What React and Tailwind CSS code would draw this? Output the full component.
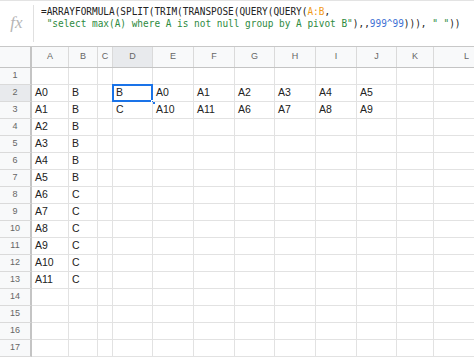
import React from 'react';

const cols = [
  { name: 'A', w: 'w-[37px]' },
  { name: 'B', w: 'w-[29px]' },
  { name: 'C', w: 'w-[15px]' },
  { name: 'D', w: 'w-[40px]' },
  { name: 'E', w: 'w-[41px]' },
  { name: 'F', w: 'w-[41px]' },
  { name: 'G', w: 'w-[40px]' },
  { name: 'H', w: 'w-[41px]' },
  { name: 'I', w: 'w-[41px]' },
  { name: 'J', w: 'w-[40px]' },
  { name: 'K', w: 'w-[37px]' },
  { name: 'L', w: 'w-[66px]' },
];

// sparse cell data: data[row][colIndex]
const data = {
  2: { 0: 'A0', 1: 'B', 3: 'B', 4: 'A0', 5: 'A1', 6: 'A2', 7: 'A3', 8: 'A4', 9: 'A5' },
  3: { 0: 'A1', 1: 'B', 3: 'C', 4: 'A10', 5: 'A11', 6: 'A6', 7: 'A7', 8: 'A8', 9: 'A9' },
  4: { 0: 'A2', 1: 'B' },
  5: { 0: 'A3', 1: 'B' },
  6: { 0: 'A4', 1: 'B' },
  7: { 0: 'A5', 1: 'B' },
  8: { 0: 'A6', 1: 'C' },
  9: { 0: 'A7', 1: 'C' },
  10: { 0: 'A8', 1: 'C' },
  11: { 0: 'A9', 1: 'C' },
  12: { 0: 'A10', 1: 'C' },
  13: { 0: 'A11', 1: 'C' },
};

const rows = Array.from({ length: 17 }, (_, i) => i + 1);

const FormulaBar = () => (
  <div className="flex h-[47px] border-t border-t-[#e3e3e3] border-b border-b-[#c8c8c8] bg-white">
    <div className="w-[33px] flex items-center justify-center">
      <span className="text-[#b5b5b5] italic text-[17px] font-['Liberation_Serif',serif] -mt-[2px]">fx</span>
    </div>
    <div className="w-px bg-[#e0e0e0] my-[4px]" />
    <div className="flex-1 pl-[7px] pt-[5px] overflow-hidden">
      <div className="origin-left scale-x-[0.856] whitespace-pre font-['DejaVu_Sans_Mono',monospace] text-[11px] leading-[12px] text-[#222]">
        <div>
          =ARRAYFORMULA(SPLIT(TRIM(TRANSPOSE(QUERY(QUERY(<span className="text-[#f29a16]">A:B</span>,
        </div>
        <div>
          {' '}<span className="text-[#2d8a3e]">"select max(A) where A is not null group by A pivot B"</span>),,<span className="text-[#3f72d4]">999^99</span>))), <span className="text-[#2d8a3e]">" "</span>))
        </div>
      </div>
    </div>
  </div>
);

const App = () => {
  return (
    <div className="w-[474px] h-[357px] overflow-hidden bg-white">
      <FormulaBar />

      {/* column header */}
      <div className="flex h-[21px] bg-[#f8f9fa] border-b border-b-[#c4c4c4]">
        <div className="w-[32px] shrink-0 border-r-2 border-r-[#c4c4c4]" />
        {cols.map((c, i) => (
          <div
            key={c.name}
            className={`${c.w} shrink-0 flex items-center justify-center border-r border-r-[#dadada] text-[9px] text-[#666] font-['Liberation_Sans',sans-serif] ${i === 3 ? 'bg-[#e8eaed]' : ''}`}
          >
            {c.name}
          </div>
        ))}
      </div>

      {/* rows */}
      {rows.map((r) => (
        <div key={r} className="flex h-[17px]">
          <div
            className={`w-[32px] shrink-0 flex items-center justify-center border-r-2 border-r-[#c4c4c4] border-b border-b-[#dadada] text-[9px] text-[#666] font-['Liberation_Sans',sans-serif] ${r === 2 ? 'bg-[#e8eaed]' : 'bg-[#f8f9fa]'}`}
          >
            {r}
          </div>
          {cols.map((c, i) => (
            <div
              key={c.name}
              className={`${c.w} shrink-0 relative flex items-center pl-[3px] border-r border-b border-[#e2e2e2] text-[10.5px] text-[#222] font-['Liberation_Sans',sans-serif] whitespace-nowrap`}
            >
              {data[r] && data[r][i]}
              {r === 2 && i === 3 && (
                <>
                  <div className="absolute -left-px -top-px right-[-1px] bottom-[-1px] border-2 border-[#1a73e8]" />
                  <div className="absolute right-[-4px] bottom-[-4px] w-[5px] h-[5px] bg-[#1a73e8] border border-white" />
                </>
              )}
            </div>
          ))}
        </div>
      ))}
    </div>
  );
};

export default App;
